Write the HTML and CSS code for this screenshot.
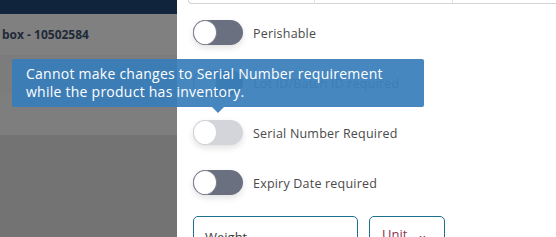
FILE: index.html
```html
<!DOCTYPE html>
<html lang="en">
<head>
<meta charset="utf-8">
<title>Product settings</title>
<link rel="stylesheet" href="styles.css">
</head>
<body>
<div class="page">
  <div class="backdrop">
    <div class="topbar"></div>
    <div class="row row-title"><span class="title">box - 10502584</span></div>
    <div class="row row-a"></div>
    <div class="row row-b"></div>
    <div class="rest"></div>
  </div>
  <div class="panel">
    <div class="inputs-top">
      <div class="seg seg-first"></div>
      <div class="seg seg-mid"></div>
      <div class="seg seg-last"></div>
    </div>
    <div class="toggles">
      <div class="toggle-row">
        <span class="switch"><span class="knob"></span></span>
        <span class="label">Perishable</span>
      </div>
      <div class="toggle-row">
        <span class="switch"><span class="knob"></span></span>
        <span class="label label-muted">Lot ID/Batch ID required</span>
      </div>
      <div class="toggle-row">
        <span class="switch switch-disabled"><span class="knob"></span></span>
        <span class="label">Serial Number Required</span>
      </div>
      <div class="toggle-row">
        <span class="switch"><span class="knob"></span></span>
        <span class="label">Expiry Date required</span>
      </div>
    </div>
    <div class="fields">
      <div class="field field-weight"><span class="field-label">Weight</span></div>
      <div class="field field-unit"><span class="field-label unit-label">Unit</span><span class="chev">&#8964;</span></div>
    </div>
  </div>
  <div class="tooltip">
    <p>Cannot make changes to Serial Number requirement<br>while the product has inventory.</p>
    <span class="arrow"></span>
  </div>
</div>
</body>
</html>
```
FILE: styles.css
```css
* { box-sizing: border-box; }
html, body { margin: 0; padding: 0; }
body {
  width: 556px;
  height: 237px;
  overflow: hidden;
  font-family: "Open Sans", "Liberation Sans", sans-serif;
  background: #fff;
}
.page {
  position: relative;
  display: flex;
  width: 556px;
  height: 237px;
  overflow: hidden;
}
.backdrop {
  width: 177px;
  flex: none;
  display: flex;
  flex-direction: column;
  background: #737373;
}
.topbar { height: 14px; background: #10243b; }
.row-title {
  height: 41px;
  background: #808080;
  display: flex;
  align-items: center;
  padding-left: 2px;
}
.title {
  font-size: 12px;
  font-weight: 700;
  color: #1f2a38;
}
.row-a { height: 38px; background: #7c7c7c; }
.row-b { height: 42px; background: #7e7e7e; }
.rest { flex: 1; background: #737373; }

.panel {
  flex: 1;
  background: #fff;
  display: flex;
  flex-direction: column;
}
.inputs-top {
  display: flex;
  height: 4px;
  margin-left: 11px;
}
.seg {
  height: 4px;
  border-bottom: 1px solid #d4d4d4;
}
.seg-first {
  width: 127px;
  border-left: 1px solid #d4d4d4;
  border-right: 1px solid #e2e2e2;
  border-bottom-left-radius: 4px;
}
.seg-mid {
  width: 138px;
  border-right: 1px solid #e2e2e2;
}
.seg-last { flex: 1; }

.toggles {
  display: flex;
  flex-direction: column;
  gap: 25px;
  padding: 16px 0 0 16px;
}
.toggle-row {
  display: flex;
  align-items: center;
  gap: 10px;
  height: 25px;
}
.switch {
  width: 50px;
  height: 25px;
  border-radius: 13px;
  background: #6b7080;
  display: flex;
  align-items: center;
  box-shadow: 0 3px 6px rgba(0,0,0,0.12);
  flex: none;
}
.switch-disabled { background: #d3d5db; }
.knob {
  width: 24px;
  height: 25px;
  border-radius: 50%;
  background: #fff;
  border: 1px solid #7b7f8c;
}
.switch-disabled .knob { border-color: #d0d2d8; }
.label {
  font-size: 12.5px;
  letter-spacing: 0.2px;
  color: #4a4a4a;
  padding-top: 1px;
}
.label-muted { color: #7a7a7a; }
.fields {
  display: flex;
  gap: 11px;
  padding: 21px 0 0 16px;
}
.field {
  height: 40px;
  border: 1px solid #1e6e8e;
  border-radius: 5px;
  padding: 8px 0 0 11px;
}
.field-weight { width: 165px; }
.field-unit { width: 76px; display: flex; gap: 10px; padding-left: 12px; }
.field-label { font-size: 13px; color: #3a3a3a; }
.unit-label { color: #8e3552; }
.chev { font-size: 13px; color: #8e3552; }

.tooltip {
  position: absolute;
  left: 12px;
  top: 59px;
  width: 412px;
  height: 48px;
  background: rgba(54, 125, 187, 0.92);
  border-radius: 2px;
  padding: 6px 0 0 14px;
}
.tooltip p {
  margin: 0;
  color: #fff;
  font-size: 14px;
  letter-spacing: 0.25px;
  line-height: 18px;
}
.arrow {
  position: absolute;
  left: 200px;
  bottom: -6px;
  width: 0;
  height: 0;
  border-left: 6px solid transparent;
  border-right: 6px solid transparent;
  border-top: 6px solid rgba(54, 125, 187, 0.92);
}
```
